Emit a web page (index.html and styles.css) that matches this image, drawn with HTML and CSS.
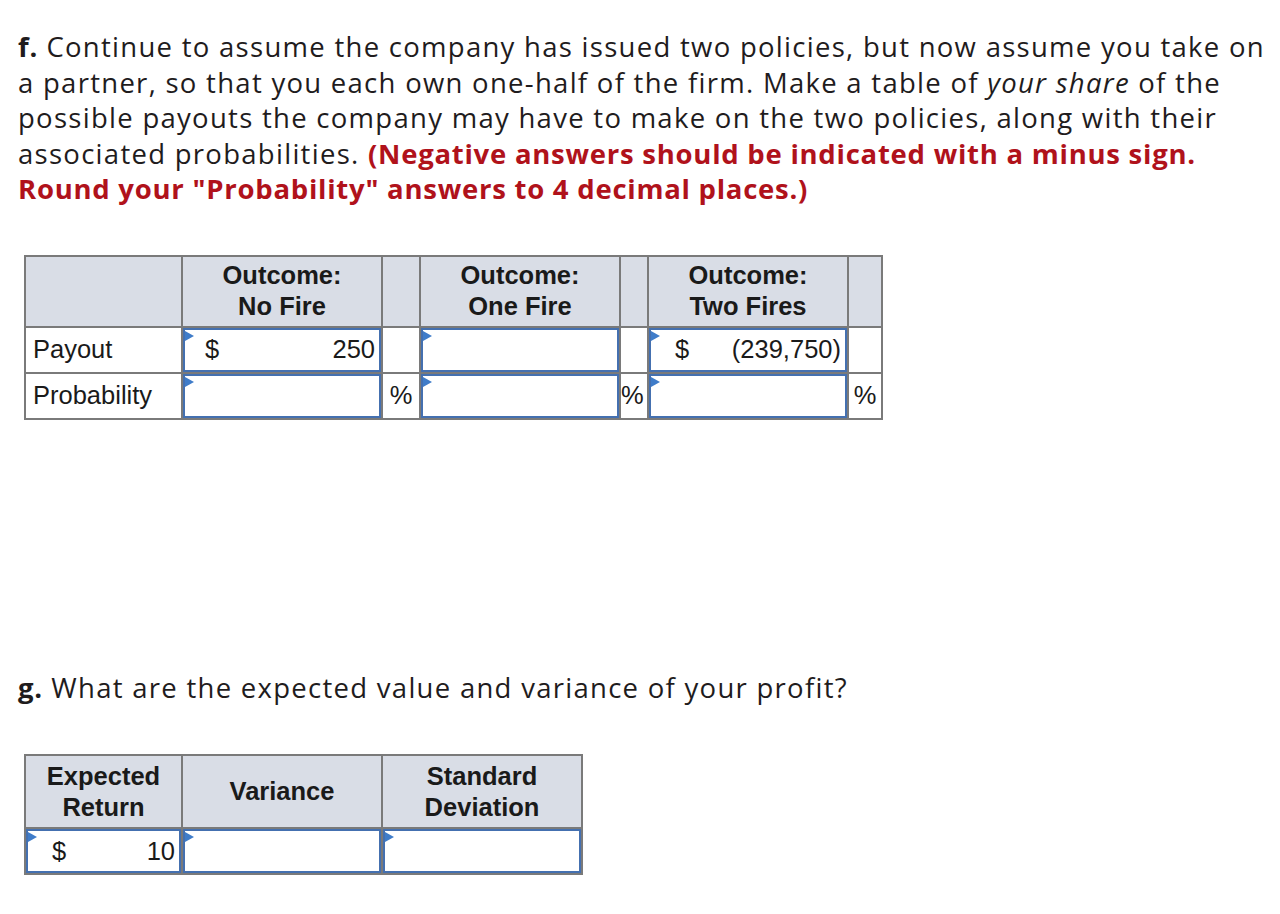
FILE: index.html
```html
<!DOCTYPE html>
<html lang="en">
<head>
<meta charset="utf-8">
<title>Policies</title>
<link rel="stylesheet" href="styles.css">
</head>
<body>
<div class="page">
  <p class="q"><b>f.</b> Continue to assume the company has issued two policies, but now assume you take on<br>a partner, so that you each own one-half of the firm. Make a table of <i>your share</i> of the<br>possible payouts the company may have to make on the two policies, along with their<br>associated probabilities. <span class="note">(Negative answers should be indicated with a minus sign.<br>Round your "Probability" answers to 4 decimal places.)</span></p>

  <table class="grid t1">
    <colgroup>
      <col class="c-lbl"><col class="c-in"><col class="c-p1"><col class="c-in"><col class="c-p2"><col class="c-in"><col class="c-p3">
    </colgroup>
    <thead>
      <tr class="head">
        <th></th>
        <th>Outcome:<br>No Fire</th>
        <th></th>
        <th>Outcome:<br>One Fire</th>
        <th></th>
        <th>Outcome:<br>Two Fires</th>
        <th></th>
      </tr>
    </thead>
    <tbody>
      <tr>
        <td class="lbl">Payout</td>
        <td class="in"><div class="box"><span class="cur">$</span><span class="val">250</span></div></td>
        <td class="pct"></td>
        <td class="in"><div class="box"></div></td>
        <td class="pct"></td>
        <td class="in"><div class="box"><span class="cur cur-wide">$</span><span class="val">(239,750)</span></div></td>
        <td class="pct"></td>
      </tr>
      <tr>
        <td class="lbl">Probability</td>
        <td class="in"><div class="box"></div></td>
        <td class="pct">%</td>
        <td class="in"><div class="box"></div></td>
        <td class="pct pct-tight">%</td>
        <td class="in"><div class="box"></div></td>
        <td class="pct">%</td>
      </tr>
    </tbody>
  </table>

  <p class="q q-g"><b>g.</b> What are the expected value and variance of your profit?</p>

  <table class="grid t2">
    <colgroup>
      <col class="c-lbl"><col class="c-in"><col class="c-in">
    </colgroup>
    <thead>
      <tr class="head head2">
        <th>Expected<br>Return</th>
        <th>Variance</th>
        <th>Standard<br>Deviation</th>
      </tr>
    </thead>
    <tbody>
      <tr>
        <td class="in"><div class="box"><span class="cur cur-er">$</span><span class="val">10</span></div></td>
        <td class="in"><div class="box"></div></td>
        <td class="in"><div class="box"></div></td>
      </tr>
    </tbody>
  </table>
</div>
</body>
</html>
```

FILE: styles.css
```css
html, body {
  margin: 0;
  padding: 0;
  background: #ffffff;
}

.page {
  padding: 29px 0 0 18px;
  width: 1275px;
  box-sizing: border-box;
}

.q {
  margin: 0;
  font-family: "Open Sans", Lato, sans-serif;
  font-size: 27.5px;
  letter-spacing: 1.28px;
  line-height: 35.5px;
  color: #1f1c1d;
  white-space: nowrap;
}

.q b {
  font-weight: 700;
  letter-spacing: 0.75px;
}

.note {
  color: #b0121b;
  font-weight: 700;
  letter-spacing: 0.75px;
}

.q-g {
  margin-top: 250px;
}

.grid {
  border-collapse: collapse;
  table-layout: fixed;
  font-family: "Liberation Sans", Arial, sans-serif;
  font-size: 25.5px;
  color: #1a1a1a;
  margin-left: 6px;
}

.t1 {
  margin-top: 48px;
  width: 857px;
}

.t2 {
  margin-top: 49px;
  width: 557px;
}

.grid th,
.grid td {
  border: 2px solid #7a7a7a;
  padding: 0;
}

.c-lbl { width: 157px; }
.c-in { width: 200px; }
.c-p1 { width: 38px; }
.c-p2 { width: 28px; }
.c-p3 { width: 34px; }

.head th {
  background: #d9dde6;
  font-weight: 700;
  line-height: 31px;
  height: 69px;
  text-align: center;
  vertical-align: middle;
}

.head2 th {
  height: 71px;
}

.grid tbody td {
  height: 44px;
  vertical-align: middle;
}

.lbl {
  padding-left: 7px !important;
  text-align: left;
}

.pct {
  text-align: center;
}

.pct-tight {
  text-align: left;
}

.in {
  padding: 0 !important;
}

.box {
  position: relative;
  box-sizing: border-box;
  height: 44px;
  border: 2px solid #4470b0;
  display: flex;
  align-items: center;
  justify-content: space-between;
  padding: 0 4px 0 20px;
}

.box::before {
  content: "";
  position: absolute;
  left: 0;
  top: 1px;
  width: 0;
  height: 0;
  border-top: 5px solid transparent;
  border-bottom: 5px solid transparent;
  border-left: 9px solid #3f7cc9;
}

.cur-wide {
  margin-left: 4px;
}

.cur-er {
  margin-left: 4px;
}
```
